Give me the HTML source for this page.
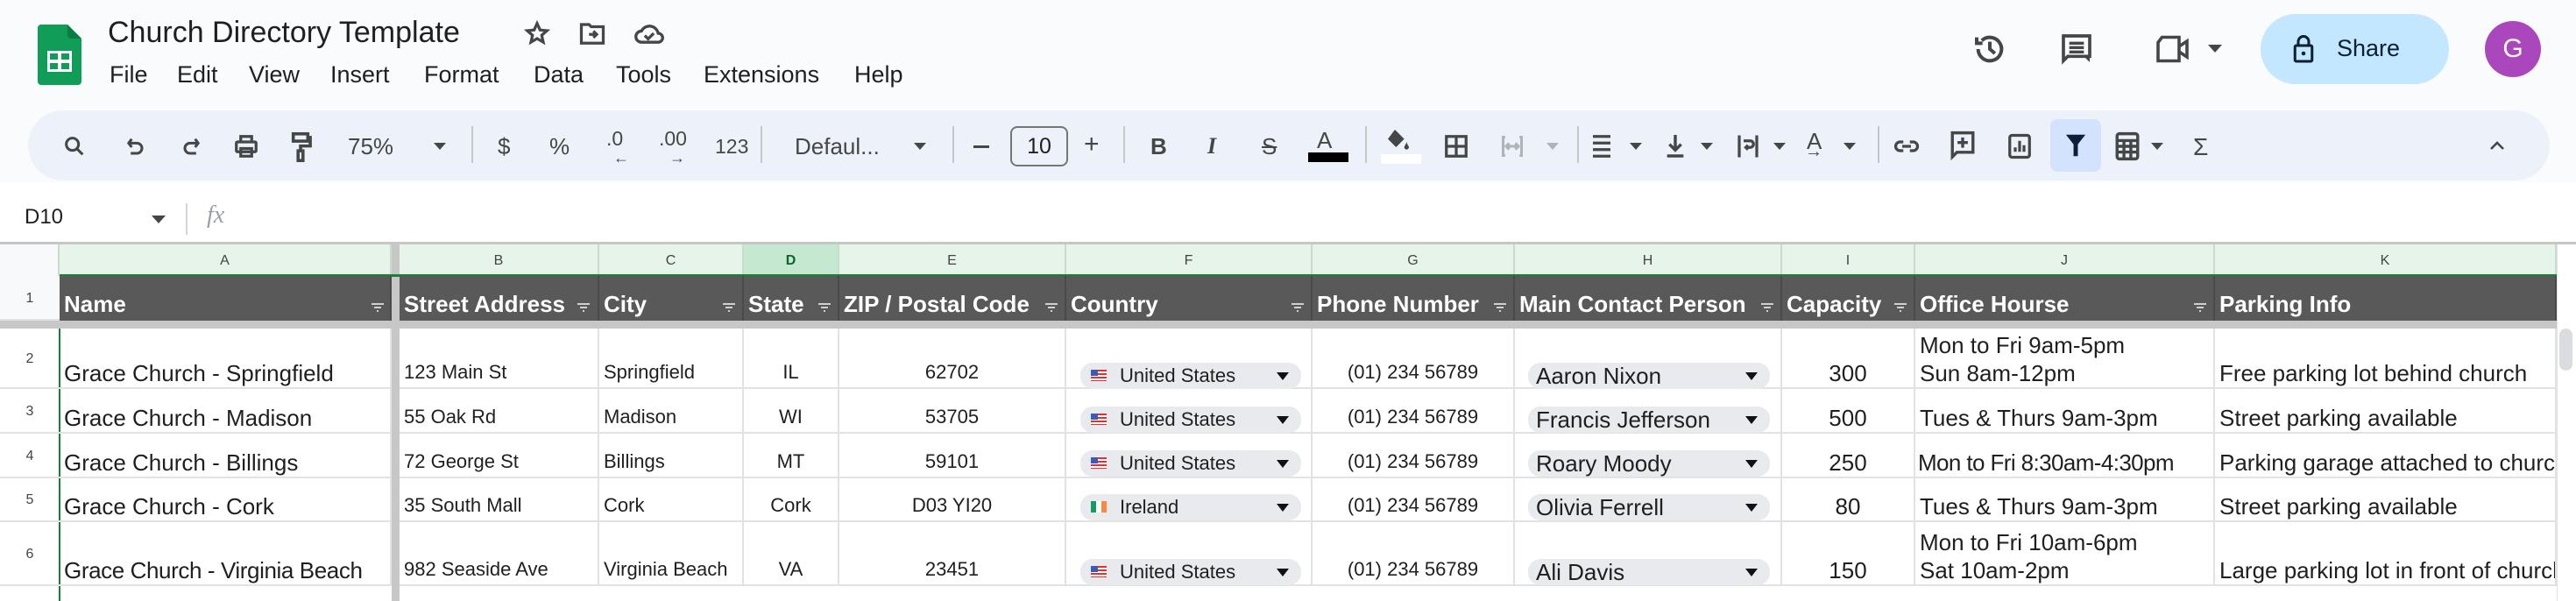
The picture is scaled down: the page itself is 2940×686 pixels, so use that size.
<!DOCTYPE html>
<html><head><meta charset="utf-8">
<style>
*{box-sizing:border-box;margin:0;padding:0}
body{width:2940px;height:686px;overflow:hidden;background:#f9fbfd;font-family:"Liberation Sans",Arial,sans-serif;color:#1f1f1f;position:relative}
.a{position:absolute}
.t{position:absolute;white-space:nowrap}
.menu{font-size:27px;top:70px;color:#1f1f1f}
.ic{position:absolute;fill:none;stroke:#444746;stroke-width:2.6}
.tb{position:absolute;font-size:26px;color:#444746;top:152px;white-space:nowrap}
.sep{position:absolute;top:144px;width:2px;height:42px;background:#c7c7c7}
.dd{position:absolute;width:0;height:0;border-left:7px solid transparent;border-right:7px solid transparent;border-top:8px solid #444746;top:163px}
#grid{position:absolute;left:0;top:279px;width:2940px;height:407px;background:#fff}
.ch{position:absolute;top:0;height:36px;background:#e6f4ea;border-right:2px solid #c7dccd;font-size:16px;color:#444;text-align:center;line-height:38px}
.hd{position:absolute;top:36px;height:51px;background:#595959;color:#fff;font-weight:bold;font-size:26px;border-right:2px solid #4a4a4a;padding-left:5px;line-height:64px;white-space:nowrap;overflow:hidden}
.cell{position:absolute;border-right:2px solid #e2e2e2;border-bottom:2px solid #e2e2e2;font-size:26px;white-space:nowrap;overflow:hidden;display:flex;align-items:flex-end;padding:0 5px 0 5px;line-height:32px}
.sm{font-size:22px;padding-bottom:1px}
.c{justify-content:center}
.rn{position:absolute;left:0;width:68px;font-size:16px;color:#444;text-align:center;border-bottom:2px solid #e2e2e2}
.chip{position:absolute;height:30px;background:#e8eaed;border-radius:14px;font-size:22px;line-height:30px}
.chip2{font-size:26px}
.arr{position:absolute;right:14px;top:11px;width:0;height:0;border-left:7px solid transparent;border-right:7px solid transparent;border-top:9px solid #111}
</style></head><body>

<svg class="a" style="left:43px;top:28px" width="50" height="69" viewBox="0 0 50 69">
<path d="M4 0H34L50 16V65a4 4 0 0 1-4 4H4a4 4 0 0 1-4-4V4a4 4 0 0 1 4-4z" fill="#0f9d58"/>
<path d="M34 0L50 16H38a4 4 0 0 1-4-4z" fill="#0b7a43"/>
<rect x="11" y="30" width="28" height="24" fill="#fff"/>
<rect x="14" y="33" width="9" height="7" fill="#0f9d58"/><rect x="27" y="33" width="9" height="7" fill="#0f9d58"/>
<rect x="14" y="44" width="9" height="7" fill="#0f9d58"/><rect x="27" y="44" width="9" height="7" fill="#0f9d58"/>
</svg>
<div class="t" style="left:123px;top:18px;font-size:34px;color:#1f1f1f">Church Directory Template</div>
<svg class="ic" style="left:598px;top:23px" width="30" height="30" viewBox="0 0 24 24"><path d="M12 3l2.7 6 6.3.6-4.8 4.2 1.4 6.3L12 16.8 6.4 20.1l1.4-6.3L3 9.6l6.3-.6z"/></svg>
<svg class="ic" style="left:661px;top:24px" width="30" height="28" viewBox="0 0 24 22"><path d="M2 3h7l2 2h11v15H2z"/><path d="M9 12h7M13 9l3 3-3 3"/></svg>
<svg class="ic" style="left:723px;top:24px" width="36" height="28" viewBox="0 0 28 22"><path d="M7 19a5 5 0 0 1 0-10 8 8 0 0 1 15 2 4 4 0 0 1 0 8z"/><path d="M10 13l3 3 5-5"/></svg>

<div class="t menu" style="left:125px">File</div>
<div class="t menu" style="left:202px">Edit</div>
<div class="t menu" style="left:284px">View</div>
<div class="t menu" style="left:377px">Insert</div>
<div class="t menu" style="left:484px">Format</div>
<div class="t menu" style="left:609px">Data</div>
<div class="t menu" style="left:703px">Tools</div>
<div class="t menu" style="left:803px">Extensions</div>
<div class="t menu" style="left:975px">Help</div>

<svg class="ic" style="left:2251px;top:36px;stroke-width:2.4" width="40" height="40" viewBox="0 0 24 24"><path d="M4 12a8 8 0 1 0 2.5-5.8"/><path d="M3 4v4h4"/><path d="M12 7v5l3.5 3"/></svg>
<svg class="a" style="left:2350px;top:36px" width="40" height="40" viewBox="0 0 24 24"><path d="M3 3h18v14H6l-3 3z" fill="none" stroke="#444746" stroke-width="2.2"/><path d="M7 8h10M7 11h10M7 14h10" stroke="#444746" stroke-width="2"/><path d="M17 17h4v4z" fill="#444746"/></svg>
<svg class="ic" style="left:2458px;top:38px;stroke-width:2.4" width="46" height="36" viewBox="0 0 30 24"><path d="M6 3h13v18H3V7z"/><path d="M19 10l6-4v12l-6-4"/></svg>
<div class="a" style="left:2520px;top:51px;border-left:8px solid transparent;border-right:8px solid transparent;border-top:9px solid #444746"></div>
<div class="a" style="left:2580px;top:16px;width:215px;height:80px;border-radius:40px;background:#c2e7ff"></div>
<svg class="a" style="left:2617px;top:38px" width="24" height="34" viewBox="0 0 16 22"><rect x="1.5" y="9" width="13" height="12" rx="1" fill="none" stroke="#0b1f33" stroke-width="2"/><path d="M4 9V6a4 4 0 0 1 8 0v3" fill="none" stroke="#0b1f33" stroke-width="2"/><circle cx="8" cy="15" r="1.5" fill="#0b1f33"/></svg>
<div class="t" style="left:2667px;top:40px;font-size:27px;color:#0b1f33;font-weight:500">Share</div>
<div class="a" style="left:2836px;top:24px;width:64px;height:64px;border-radius:50%;background:#ab47bc;color:#fff;font-size:30px;text-align:center;line-height:64px">G</div>

<div class="a" style="left:32px;top:126px;width:2878px;height:80px;border-radius:40px;background:#edf2fa"></div>
<svg class="ic" style="left:71px;top:153px" width="28" height="28" viewBox="0 0 24 24"><circle cx="10" cy="10" r="6"/><path d="M14.5 14.5L20 20"/></svg>
<svg class="ic" style="left:142px;top:154px" width="26" height="28" viewBox="0 0 20 24"><path d="M6 4L3 8l3 4"/><path d="M3 8h8a5 5 0 0 1 0 10H5"/></svg>
<svg class="ic" style="left:205px;top:154px" width="26" height="28" viewBox="0 0 20 24"><path d="M14 4l3 4-3 4"/><path d="M17 8H9a5 5 0 0 0 0 10h6"/></svg>
<svg class="ic" style="left:266px;top:152px" width="30" height="30" viewBox="0 0 24 24"><path d="M7 8V3h10v5"/><rect x="3" y="8" width="18" height="9" rx="1"/><rect x="7" y="14" width="10" height="7"/></svg>
<svg class="ic" style="left:330px;top:150px" width="26" height="36" viewBox="0 0 18 26"><rect x="3" y="2" width="12" height="6"/><path d="M15 5h2v7H9v4"/><rect x="7" y="16" width="4" height="8"/></svg>
<div class="tb" style="left:397px">75%</div>
<div class="dd" style="left:495px"></div>
<div class="sep" style="left:538px"></div>
<div class="tb" style="left:568px">$</div>
<div class="tb" style="left:627px">%</div>
<div class="tb" style="left:692px;top:145px;font-size:23px">.0</div><div class="tb" style="left:700px;top:170px;font-size:18px">←</div>
<div class="tb" style="left:752px;top:145px;font-size:23px">.00</div><div class="tb" style="left:764px;top:170px;font-size:18px">→</div>
<div class="tb" style="left:816px;font-size:23px;top:154px">123</div>
<div class="sep" style="left:868px"></div>
<div class="tb" style="left:907px">Defaul...</div>
<div class="dd" style="left:1043px"></div>
<div class="sep" style="left:1087px"></div>
<div class="a" style="left:1111px;top:166px;width:18px;height:2.5px;background:#444746"></div>
<div class="a" style="left:1153px;top:144px;width:66px;height:46px;border:2px solid #747775;border-radius:8px;font-size:25px;text-align:center;line-height:42px;color:#1f1f1f">10</div>
<div class="tb" style="left:1237px;top:148px;font-size:30px">+</div>
<div class="sep" style="left:1282px"></div>
<div class="tb" style="left:1313px;font-weight:bold">B</div>
<div class="tb" style="left:1378px;font-style:italic;font-weight:bold;font-family:'Liberation Serif',serif">I</div>
<div class="tb" style="left:1440px;text-decoration:line-through">S</div>
<div class="tb" style="left:1503px;top:145px">A</div>
<div class="a" style="left:1493px;top:174px;width:46px;height:11px;background:#000"></div>
<div class="sep" style="left:1558px"></div>
<svg class="ic" style="left:1580px;top:145px;fill:#444746;stroke:none" width="32" height="30" viewBox="0 0 24 22"><path d="M9 2l-6 8 7 7 7-7z M19 12c0 2 -2 4 -2 5a2 2 0 0 0 4 0c0-1-2-3-2-5z"/></svg>
<div class="a" style="left:1576px;top:176px;width:46px;height:11px;background:#fff"></div>
<svg class="ic" style="left:1647px;top:152px" width="30" height="30" viewBox="0 0 24 24"><rect x="3" y="3" width="18" height="18"/><path d="M12 3v18M3 12h18"/></svg>
<svg class="ic" style="left:1712px;top:152px;stroke:#b0b3b8" width="28" height="30" viewBox="0 0 24 24"><path d="M5 3H3v18h2M19 3h2v18h-2M7 12h10M9 9l-3 3 3 3M15 9l3 3-3 3"/></svg>
<div class="dd" style="left:1765px;border-top-color:#b0b3b8"></div>
<div class="sep" style="left:1800px"></div>
<svg class="ic" style="left:1815px;top:152px" width="26" height="30" viewBox="0 0 20 24"><path d="M2 3h16M2 9h16M2 15h16M2 21h16"/></svg>
<div class="dd" style="left:1860px"></div>
<svg class="ic" style="left:1898px;top:150px" width="28" height="32" viewBox="0 0 20 24"><path d="M10 3v13M5 11l5 5 5-5M3 21h14"/></svg>
<div class="dd" style="left:1941px"></div>
<svg class="ic" style="left:1981px;top:152px" width="28" height="30" viewBox="0 0 20 24"><path d="M2 2v20M18 2v20M6 7h6a3 3 0 0 1 0 6H8M10 11l-2 2 2 2"/></svg>
<div class="dd" style="left:2024px"></div>
<div class="tb" style="left:2062px;top:146px">A</div><div class="tb" style="left:2060px;top:162px;font-size:20px">→</div>
<div class="dd" style="left:2104px"></div>
<div class="sep" style="left:2143px"></div>
<svg class="ic" style="left:2161px;top:153px" width="30" height="28" viewBox="0 0 24 22"><path d="M9 7H6a4 4 0 0 0 0 8h3M15 7h3a4 4 0 0 1 0 8h-3M8 11h8"/></svg>
<svg class="ic" style="left:2225px;top:149px" width="30" height="34" viewBox="0 0 22 26"><path d="M2 2h18v17H6l-4 4z"/><path d="M11 6v9M6.5 10.5h9"/></svg>
<svg class="ic" style="left:2291px;top:152px" width="28" height="30" viewBox="0 0 22 24"><rect x="2" y="2" width="18" height="20" rx="2"/><path d="M7 17v-4M11 17V7M15 17v-6"/></svg>
<div class="a" style="left:2340px;top:136px;width:58px;height:60px;border-radius:8px;background:#d3e3fd"></div>
<svg class="a" style="left:2354px;top:150px" width="30" height="32" viewBox="0 0 24 26"><path d="M3 3h18l-7 9v11h-4V12z" fill="#0b1f3a"/></svg>
<svg class="ic" style="left:2412px;top:150px" width="32" height="34" viewBox="0 0 24 26"><rect x="3" y="2" width="18" height="22" rx="2"/><path d="M3 8h18M3 13h18M3 18h18M9 8v16M15 8v16"/></svg>
<div class="dd" style="left:2455px"></div>
<div class="tb" style="left:2503px;font-size:28px">Σ</div>
<svg class="ic" style="left:2838px;top:158px" width="24" height="16" viewBox="0 0 24 16"><path d="M5 12l7-7 7 7"/></svg>

<div class="a" style="left:0;top:208px;width:2940px;height:71px;background:#fff"></div>
<div class="t" style="left:28px;top:234px;font-size:24px;color:#1f1f1f">D10</div>
<div class="a" style="left:173px;top:246px;border-left:8px solid transparent;border-right:8px solid transparent;border-top:9px solid #444746"></div>
<div class="a" style="left:212px;top:232px;width:2px;height:36px;background:#d5d5d5"></div>
<div class="t" style="left:236px;top:230px;font-size:28px;color:#9aa0a6;font-style:italic;font-family:'Liberation Serif',serif">fx</div>
<div class="a" style="left:0;top:276px;width:2940px;height:4px;background:#c4c7c5"></div>

<div id="grid">
<div class="a" style="left:0;top:0;width:68px;height:36px;background:#f8f9fa;border-right:2px solid #c7dccd"></div>
<div class="ch" style="left:68px;width:379px">A</div>
<div class="a" style="left:447px;top:0;width:9px;height:407px;background:#c7c7c7"></div>
<div class="ch" style="left:456px;width:228px">B</div>
<div class="ch" style="left:684px;width:165px">C</div>
<div class="ch" style="left:849px;width:109px;background:#c4e9d0;font-weight:bold;color:#0d652d">D</div>
<div class="ch" style="left:958px;width:259px">E</div>
<div class="ch" style="left:1217px;width:281px">F</div>
<div class="ch" style="left:1498px;width:231px">G</div>
<div class="ch" style="left:1729px;width:305px">H</div>
<div class="ch" style="left:2034px;width:152px">I</div>
<div class="ch" style="left:2186px;width:342px">J</div>
<div class="ch" style="left:2528px;width:390px">K</div>
<div class="a" style="left:68px;top:34px;width:2850px;height:3px;background:#188038"></div>

<div class="rn" style="top:36px;height:51px;line-height:51px;background:#f8f9fa">1</div>
<div class="hd" style="left:68px;width:379px">Name</div>
<div class="hd" style="left:456px;width:228px">Street Address</div>
<div class="hd" style="left:684px;width:165px">City</div>
<div class="hd" style="left:849px;width:109px">State</div>
<div class="hd" style="left:958px;width:259px">ZIP / Postal Code</div>
<div class="hd" style="left:1217px;width:281px">Country</div>
<div class="hd" style="left:1498px;width:231px">Phone Number</div>
<div class="hd" style="left:1729px;width:305px">Main Contact Person</div>
<div class="hd" style="left:2034px;width:152px">Capacity</div>
<div class="hd" style="left:2186px;width:342px">Office Hourse</div>
<div class="hd" style="left:2528px;width:390px">Parking Info</div>
<svg class="a" style="left:0;top:0" width="2940" height="90">
<g stroke="#cfcfcf" stroke-width="2">
<path d="M424 68h14M427 72h8M430 76h2"/>
<path d="M659 68h14M662 72h8M665 76h2"/>
<path d="M825 68h14M828 72h8M831 76h2"/>
<path d="M934 68h14M937 72h8M940 76h2"/>
<path d="M1193 68h14M1196 72h8M1199 76h2"/>
<path d="M1474 68h14M1477 72h8M1480 76h2"/>
<path d="M1705 68h14M1708 72h8M1711 76h2"/>
<path d="M2010 68h14M2013 72h8M2016 76h2"/>
<path d="M2162 68h14M2165 72h8M2168 76h2"/>
<path d="M2504 68h14M2507 72h8M2510 76h2"/>
</g></svg>
<div class="a" style="left:0;top:87px;width:2918px;height:9px;background:#c7c7c7"></div>
<div class="a" style="left:67px;top:96px;width:2px;height:311px;background:#188038"></div>

<div class="rn" style="top:96px;height:69px;line-height:69px">2</div>
<div class="rn" style="top:165px;height:51px;line-height:51px">3</div>
<div class="rn" style="top:216px;height:51px;line-height:51px">4</div>
<div class="rn" style="top:267px;height:50px;line-height:50px">5</div>
<div class="rn" style="top:317px;height:73px;line-height:73px">6</div>

<div class="cell" style="left:68px;top:96px;width:379px;height:69px">Grace Church - Springfield</div>
<div class="cell sm" style="left:456px;top:96px;width:228px;height:69px">123 Main St</div>
<div class="cell sm" style="left:684px;top:96px;width:165px;height:69px">Springfield</div>
<div class="cell sm c" style="left:849px;top:96px;width:109px;height:69px">IL</div>
<div class="cell sm c" style="left:958px;top:96px;width:259px;height:69px">62702</div>
<div class="cell" style="left:1217px;top:96px;width:281px;height:69px"></div>
<div class="cell sm c" style="left:1498px;top:96px;width:231px;height:69px">(01) 234 56789</div>
<div class="cell" style="left:1729px;top:96px;width:305px;height:69px"></div>
<div class="cell c" style="left:2034px;top:96px;width:152px;height:69px">300</div>
<div class="cell" style="left:2186px;top:96px;width:342px;height:69px;white-space:normal">Mon to Fri 9am-5pm<br>Sun 8am-12pm</div>
<div class="cell" style="left:2528px;top:96px;width:390px;height:69px">Free parking lot behind church</div>

<div class="cell" style="left:68px;top:165px;width:379px;height:51px">Grace Church - Madison</div>
<div class="cell sm" style="left:456px;top:165px;width:228px;height:51px">55 Oak Rd</div>
<div class="cell sm" style="left:684px;top:165px;width:165px;height:51px">Madison</div>
<div class="cell sm c" style="left:849px;top:165px;width:109px;height:51px">WI</div>
<div class="cell sm c" style="left:958px;top:165px;width:259px;height:51px">53705</div>
<div class="cell" style="left:1217px;top:165px;width:281px;height:51px"></div>
<div class="cell sm c" style="left:1498px;top:165px;width:231px;height:51px">(01) 234 56789</div>
<div class="cell" style="left:1729px;top:165px;width:305px;height:51px"></div>
<div class="cell c" style="left:2034px;top:165px;width:152px;height:51px">500</div>
<div class="cell" style="left:2186px;top:165px;width:342px;height:51px">Tues &amp; Thurs 9am-3pm</div>
<div class="cell" style="left:2528px;top:165px;width:390px;height:51px">Street parking available</div>

<div class="cell" style="left:68px;top:216px;width:379px;height:51px">Grace Church - Billings</div>
<div class="cell sm" style="left:456px;top:216px;width:228px;height:51px">72 George St</div>
<div class="cell sm" style="left:684px;top:216px;width:165px;height:51px">Billings</div>
<div class="cell sm c" style="left:849px;top:216px;width:109px;height:51px">MT</div>
<div class="cell sm c" style="left:958px;top:216px;width:259px;height:51px">59101</div>
<div class="cell" style="left:1217px;top:216px;width:281px;height:51px"></div>
<div class="cell sm c" style="left:1498px;top:216px;width:231px;height:51px">(01) 234 56789</div>
<div class="cell" style="left:1729px;top:216px;width:305px;height:51px"></div>
<div class="cell c" style="left:2034px;top:216px;width:152px;height:51px">250</div>
<div class="cell" style="left:2186px;top:216px;width:342px;height:51px;padding-left:3px;letter-spacing:-0.6px">Mon to Fri 8:30am-4:30pm</div>
<div class="cell" style="left:2528px;top:216px;width:390px;height:51px">Parking garage attached to church</div>

<div class="cell" style="left:68px;top:267px;width:379px;height:50px">Grace Church - Cork</div>
<div class="cell sm" style="left:456px;top:267px;width:228px;height:50px">35 South Mall</div>
<div class="cell sm" style="left:684px;top:267px;width:165px;height:50px">Cork</div>
<div class="cell sm c" style="left:849px;top:267px;width:109px;height:50px">Cork</div>
<div class="cell sm c" style="left:958px;top:267px;width:259px;height:50px">D03 YI20</div>
<div class="cell" style="left:1217px;top:267px;width:281px;height:50px"></div>
<div class="cell sm c" style="left:1498px;top:267px;width:231px;height:50px">(01) 234 56789</div>
<div class="cell" style="left:1729px;top:267px;width:305px;height:50px"></div>
<div class="cell c" style="left:2034px;top:267px;width:152px;height:50px">80</div>
<div class="cell" style="left:2186px;top:267px;width:342px;height:50px">Tues &amp; Thurs 9am-3pm</div>
<div class="cell" style="left:2528px;top:267px;width:390px;height:50px">Street parking available</div>

<div class="cell" style="left:68px;top:317px;width:379px;height:73px;letter-spacing:-0.4px">Grace Church - Virginia Beach</div>
<div class="cell sm" style="left:456px;top:317px;width:228px;height:73px">982 Seaside Ave</div>
<div class="cell sm" style="left:684px;top:317px;width:165px;height:73px">Virginia Beach</div>
<div class="cell sm c" style="left:849px;top:317px;width:109px;height:73px">VA</div>
<div class="cell sm c" style="left:958px;top:317px;width:259px;height:73px">23451</div>
<div class="cell" style="left:1217px;top:317px;width:281px;height:73px"></div>
<div class="cell sm c" style="left:1498px;top:317px;width:231px;height:73px">(01) 234 56789</div>
<div class="cell" style="left:1729px;top:317px;width:305px;height:73px"></div>
<div class="cell c" style="left:2034px;top:317px;width:152px;height:73px">150</div>
<div class="cell" style="left:2186px;top:317px;width:342px;height:73px;white-space:normal">Mon to Fri 10am-6pm<br>Sat 10am-2pm</div>
<div class="cell" style="left:2528px;top:317px;width:390px;height:73px">Large parking lot in front of church</div>

<div class="chip" style="left:1233px;top:135px;width:252px"><span style="position:absolute;left:12px;top:8px;width:18px;height:13px;background:repeating-linear-gradient(#d33 0 2px,#fff 2px 4px)"><i style="position:absolute;left:0;top:0;width:8px;height:7px;background:#3a5bb8"></i></span><span style="position:absolute;left:45px">United States</span><i class="arr"></i></div>
<div class="chip" style="left:1233px;top:185px;width:252px"><span style="position:absolute;left:12px;top:8px;width:18px;height:13px;background:repeating-linear-gradient(#d33 0 2px,#fff 2px 4px)"><i style="position:absolute;left:0;top:0;width:8px;height:7px;background:#3a5bb8"></i></span><span style="position:absolute;left:45px">United States</span><i class="arr"></i></div>
<div class="chip" style="left:1233px;top:235px;width:252px"><span style="position:absolute;left:12px;top:8px;width:18px;height:13px;background:repeating-linear-gradient(#d33 0 2px,#fff 2px 4px)"><i style="position:absolute;left:0;top:0;width:8px;height:7px;background:#3a5bb8"></i></span><span style="position:absolute;left:45px">United States</span><i class="arr"></i></div>
<div class="chip" style="left:1233px;top:285px;width:252px"><span style="position:absolute;left:12px;top:8px;width:18px;height:13px;background:linear-gradient(90deg,#169b62 0 6px,#fff 6px 12px,#ff883e 12px)"></span><span style="position:absolute;left:45px">Ireland</span><i class="arr"></i></div>
<div class="chip" style="left:1233px;top:359px;width:252px"><span style="position:absolute;left:12px;top:8px;width:18px;height:13px;background:repeating-linear-gradient(#d33 0 2px,#fff 2px 4px)"><i style="position:absolute;left:0;top:0;width:8px;height:7px;background:#3a5bb8"></i></span><span style="position:absolute;left:45px">United States</span><i class="arr"></i></div>
<div class="chip chip2" style="left:1744px;top:135px;width:276px"><span style="position:absolute;left:9px">Aaron Nixon</span><i class="arr"></i></div>
<div class="chip chip2" style="left:1744px;top:185px;width:276px"><span style="position:absolute;left:9px">Francis Jefferson</span><i class="arr"></i></div>
<div class="chip chip2" style="left:1744px;top:235px;width:276px"><span style="position:absolute;left:9px">Roary Moody</span><i class="arr"></i></div>
<div class="chip chip2" style="left:1744px;top:285px;width:276px"><span style="position:absolute;left:9px">Olivia Ferrell</span><i class="arr"></i></div>
<div class="chip chip2" style="left:1744px;top:359px;width:276px"><span style="position:absolute;left:9px">Ali Davis</span><i class="arr"></i></div>

<div class="a" style="left:2918px;top:0;width:22px;height:407px;background:#fff;border-left:1px solid #e2e2e2"></div>
<div class="a" style="left:2921px;top:96px;width:15px;height:48px;border-radius:8px;background:#dadce0"></div>
</div>
</body></html>
